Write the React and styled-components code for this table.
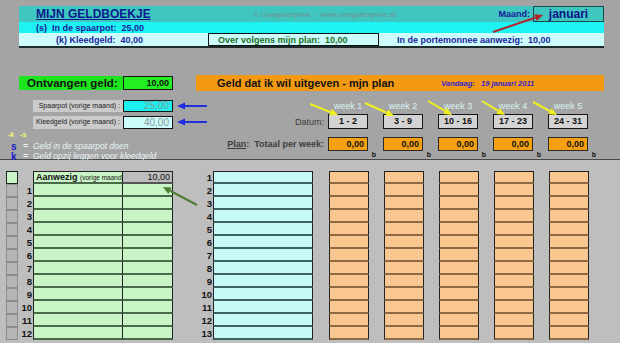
import React from "react";
import styled, { createGlobalStyle } from "styled-components";

const GlobalStyle = createGlobalStyle`
  body {
    margin: 0;
    background: #a4a4a4;
  }
`;

const Root = styled.div`
  position: relative;
  width: 620px;
  height: 343px;
  overflow: hidden;
  display: flex;
  flex-direction: column;
  font-family: "Liberation Sans", Arial, sans-serif;
  color: #111;
`;

const TopSection = styled.div`
  height: 160px;
  flex-shrink: 0;
  box-sizing: border-box;
  padding-top: 6px;
  background: #a4a4a4;
  border-bottom: 1px solid #4a4a4a;
`;

// header band ---------------------------------------------------------
const Header = styled.div`
  margin-left: 19px;
  width: 585px;
  border-bottom: 2px solid #1e2a2a;
`;

const HeaderRow = styled.div`
  display: flex;
  align-items: center;
  height: ${(p) => p.h}px;
  background: ${(p) => p.bg};
  padding-left: ${(p) => p.pad || 0}px;
  box-sizing: border-box;
`;

const Title = styled.span`
  font-size: 12px;
  font-weight: bold;
  color: #0c1a8c;
  text-decoration: underline;
`;

const Copyright = styled.span`
  margin-left: 103px;
  font-size: 7px;
  font-weight: bold;
  color: #6a9c98;
  white-space: pre;
`;

const MonthLabel = styled.span`
  margin-left: auto;
  margin-right: 3px;
  font-size: 9px;
  font-weight: bold;
  color: #1a1a9a;
`;

const MonthBox = styled.div`
  width: 71px;
  height: 16px;
  box-sizing: border-box;
  border: 1px solid #1d4848;
  display: flex;
  align-items: center;
  justify-content: center;
  font-size: 12px;
  font-weight: bold;
  color: #10108a;
`;

const HeadText = styled.span`
  font-size: 9px;
  font-weight: bold;
  color: ${(p) => p.color || "#1c1c9c"};
  white-space: pre;
  margin-left: ${(p) => p.ml || 0}px;
`;

const PlanBox = styled.div`
  margin-left: 65px;
  width: 171px;
  height: 13px;
  box-sizing: border-box;
  border: 1px solid #111;
  display: flex;
  align-items: center;
  padding-left: 9px;
`;

// middle part -------------------------------------------------------------
const Middle = styled.div`
  display: flex;
  align-items: flex-start;
`;

const LeftCol = styled.div`
  margin-left: 8px;
  margin-top: 28px;
  width: 165px;
`;

const BoxRow = styled.div`
  display: flex;
  height: ${(p) => p.h}px;
  margin-left: ${(p) => p.ml}px;
  margin-top: ${(p) => p.mt || 0}px;
`;

const ReceivedLabel = styled.div`
  width: 104px;
  background: #1ee41e;
  display: flex;
  align-items: center;
  padding-left: 8px;
  box-sizing: border-box;
  font-size: 11.5px;
  font-weight: bold;
`;

const ValueBox = styled.div`
  width: 50px;
  box-sizing: border-box;
  border: 1px solid #151515;
  background: ${(p) => p.bg};
  color: ${(p) => p.color || "#111"};
  font-size: ${(p) => p.fs || 9}px;
  font-weight: ${(p) => (p.bold ? "bold" : "normal")};
  text-align: right;
  padding-right: 3px;
  line-height: ${(p) => p.lh || 11}px;
`;

const SmallLabel = styled.div`
  width: 90px;
  background: #cbcbcb;
  font-size: 7px;
  color: #222;
  text-align: right;
  padding-right: 3px;
  box-sizing: border-box;
  line-height: 12px;
  white-space: nowrap;
  overflow: hidden;
`;

const KeyHint = styled.div`
  margin-top: 2px;
  height: 8px;
  font-size: 7px;
  font-weight: bold;
  color: #f7f76a;
  white-space: pre;
  line-height: 8px;
`;

const LegendList = styled.div`
  margin-top: 2px;
`;

const LegendRow = styled.div`
  display: flex;
  align-items: center;
  height: 10px;
`;

const LegendKey = styled.span`
  width: 15px;
  padding-left: 3px;
  box-sizing: border-box;
  font-size: 10px;
  font-weight: bold;
  color: #1a1acc;
`;

const LegendEq = styled.span`
  width: 10px;
  font-size: 9px;
  font-weight: bold;
  color: #e8f4f4;
`;

const LegendText = styled.span`
  font-size: 8.5px;
  font-style: italic;
  color: #e8f6f6;
  white-space: nowrap;
`;

const RightCol = styled.div`
  margin-left: 23px;
  margin-top: 27px;
  width: 408px;
`;

const Banner = styled.div`
  height: 16px;
  background: #f49a12;
  display: flex;
  align-items: center;
  padding-left: 21px;
`;

const BannerTitle = styled.span`
  font-size: 11px;
  font-weight: bold;
  color: #111;
`;

const Today = styled.span`
  margin-left: 47px;
  font-size: 7.5px;
  font-weight: bold;
  font-style: italic;
  color: #3424cc;
  white-space: pre;
`;

const WeekRow = styled.div`
  display: flex;
  align-items: center;
  height: ${(p) => p.h}px;
  margin-top: ${(p) => p.mt || 0}px;
`;

const RowLabel = styled.div`
  width: 130px;
  margin-right: 2px;
  text-align: right;
  padding-right: 2px;
  box-sizing: border-box;
  font-size: 9px;
  font-weight: ${(p) => (p.bold ? "bold" : "normal")};
  color: #3e3e3e;
  white-space: pre;
`;

const Underlined = styled.span`
  text-decoration: underline;
`;

const Cells = styled.div`
  display: flex;
  gap: 15px;
  height: 100%;
`;

const WeekName = styled.div`
  width: 40px;
  text-align: center;
  font-size: 9px;
  color: #d6f2f2;
  line-height: 11px;
`;

const DateBox = styled.div`
  width: 40px;
  box-sizing: border-box;
  border: 1px solid #151515;
  background: #d3d3d3;
  text-align: center;
  font-size: 9px;
  font-weight: bold;
  line-height: 13px;
`;

const TotalBox = styled.div`
  width: 40px;
  box-sizing: border-box;
  border: 1px solid #2a2a2a;
  background: #f5a012;
  text-align: right;
  padding-right: 3px;
  font-size: 9px;
  font-weight: bold;
  line-height: 12px;
`;

const BMark = styled.div`
  width: 48px;
  text-align: right;
  margin-right: -8px;
  font-size: 7px;
  font-weight: bold;
  line-height: 8px;
`;

// grid part -----------------------------------------------------------------
const BottomSection = styled.div`
  flex: 1;
  background: #bebebe;
  padding-top: 11px;
  display: flex;
  align-items: flex-start;
`;

const Block = styled.div`
  margin-left: ${(p) => p.ml}px;
  display: flex;
  flex-direction: column;
`;

const GridRow = styled.div`
  display: flex;
  height: 13px;
`;

const SideSquare = styled.div`
  width: 12px;
  height: 13px;
  box-sizing: border-box;
  border: 1px solid ${(p) => (p.first ? "#222" : "#8c8c8c")};
  background: ${(p) => (p.first ? "#c8f6c6" : "#b6b6b6")};
  margin-right: 1px;
`;

const RowNum = styled.div`
  width: ${(p) => p.w}px;
  text-align: right;
  padding-right: 1px;
  box-sizing: border-box;
  font-size: 9.5px;
  font-weight: bold;
  line-height: 13px;
`;

const Cell = styled.div`
  width: ${(p) => p.w}px;
  height: 13px;
  box-sizing: border-box;
  background: ${(p) => p.bg};
  border-right: 1px solid #222;
  border-left: ${(p) => (p.left ? "1px solid #222" : "none")};
  border-bottom: 2px solid ${(p) => p.line};
  border-top: ${(p) => (p.top ? "1px solid #222" : "none")};
  font-size: 9px;
  line-height: 10px;
  padding: 0 2px;
  white-space: nowrap;
  text-align: ${(p) => p.align || "left"};
`;

const Small = styled.span`
  font-size: 6.5px;
  font-weight: normal;
`;

const Overlay = styled.svg`
  position: absolute;
  top: 0;
  left: 0;
  pointer-events: none;
`;

const weeks = ["1 - 2", "3 - 9", "10 - 16", "17 - 23", "24 - 31"];
const GREEN = "#c9f5c6";
const GREEN_LINE = "#4a684a";
const CYAN = "#c6f8f8";
const CYAN_LINE = "#3e6262";
const PEACH = "#f9c78f";
const PEACH_LINE = "#8d6a44";

function Arrow({ x1, y1, x2, y2, color, w = 2, head = 8 }) {
  const a = Math.atan2(y2 - y1, x2 - x1);
  const bx = x2 - head * Math.cos(a);
  const by = y2 - head * Math.sin(a);
  const px = Math.sin(a) * head * 0.45;
  const py = -Math.cos(a) * head * 0.45;
  return (
    <g>
      <line x1={x1} y1={y1} x2={bx} y2={by} stroke={color} strokeWidth={w} />
      <polygon
        points={`${x2},${y2} ${bx + px},${by + py} ${bx - px},${by - py}`}
        fill={color}
      />
    </g>
  );
}

export default function App() {
  const greenRows = Array.from({ length: 13 }, (_, i) => i);
  const cyanRows = Array.from({ length: 13 }, (_, i) => i + 1);

  return (
    <Root>
      <GlobalStyle />
      <TopSection>
        <Header>
          <HeaderRow h={16} bg="#3fc6c0" pad={17}>
            <Title>MIJN GELDBOEKJE</Title>
            <Copyright>© Computerprive  -  www.computerprive.nl</Copyright>
            <MonthLabel>Maand:</MonthLabel>
            <MonthBox>januari</MonthBox>
          </HeaderRow>
          <HeaderRow h={11} bg="#1ef2f2" pad={17}>
            <HeadText>{"(s)  In de spaarpot:  25,00"}</HeadText>
          </HeaderRow>
          <HeaderRow h={13} bg="#ccfcfc" pad={37}>
            <HeadText>{"(k) Kleedgeld:  40,00"}</HeadText>
            <PlanBox>
              <HeadText color="#1f6e1f">{"Over volgens mijn plan:  10,00"}</HeadText>
            </PlanBox>
            <HeadText ml={18}>{"In de portemonnee aanwezig:  10,00"}</HeadText>
          </HeaderRow>
        </Header>

        <Middle>
          <LeftCol>
            <BoxRow h={14} ml={11}>
              <ReceivedLabel>Ontvangen geld:</ReceivedLabel>
              <ValueBox bg="#22ee22" bold lh={12}>
                10,00
              </ValueBox>
            </BoxRow>
            <BoxRow h={12} ml={25} mt={10}>
              <SmallLabel>Spaarpot (vorige maand) :</SmallLabel>
              <ValueBox bg="#1ef0f0" color="#7f9c9c" fs={10} lh={10}>
                25,00
              </ValueBox>
            </BoxRow>
            <BoxRow h={13} ml={25} mt={4}>
              <SmallLabel>Kleedgeld (vorige maand) :</SmallLabel>
              <ValueBox bg="#ccfcfc" color="#8a9a9a" fs={10} lh={11}>
                40,00
              </ValueBox>
            </BoxRow>
            <KeyHint>{"-k   -s"}</KeyHint>
            <LegendList>
              <LegendRow>
                <LegendKey>s</LegendKey>
                <LegendEq>=</LegendEq>
                <LegendText>Geld in de spaarpot doen</LegendText>
              </LegendRow>
              <LegendRow>
                <LegendKey>k</LegendKey>
                <LegendEq>=</LegendEq>
                <LegendText>Geld opzij leggen voor kleedgeld</LegendText>
              </LegendRow>
            </LegendList>
          </LeftCol>

          <RightCol>
            <Banner>
              <BannerTitle>Geld dat ik wil uitgeven - mjn plan</BannerTitle>
              <Today>{"Vandaag:   19 januari 2011"}</Today>
            </Banner>
            <WeekRow h={11} mt={10}>
              <RowLabel />
              <Cells>
                {weeks.map((_, i) => (
                  <WeekName key={i}>week {i + 1}</WeekName>
                ))}
              </Cells>
            </WeekRow>
            <WeekRow h={15} mt={2}>
              <RowLabel>Datum:</RowLabel>
              <Cells>
                {weeks.map((w) => (
                  <DateBox key={w}>{w}</DateBox>
                ))}
              </Cells>
            </WeekRow>
            <WeekRow h={14} mt={8}>
              <RowLabel bold>
                <Underlined>Plan</Underlined>
                {":  Totaal per week:"}
              </RowLabel>
              <Cells>
                {weeks.map((w) => (
                  <TotalBox key={w}>0,00</TotalBox>
                ))}
              </Cells>
            </WeekRow>
            <WeekRow h={8}>
              <RowLabel />
              <Cells>
                {weeks.map((w) => (
                  <BMark key={w}>b</BMark>
                ))}
              </Cells>
            </WeekRow>
          </RightCol>
        </Middle>
      </TopSection>

      <BottomSection>
        <Block ml={6}>
          {greenRows.map((i) => (
            <GridRow key={i}>
              <SideSquare first={i === 0} />
              <RowNum w={14}>{i === 0 ? "" : i}</RowNum>
              <Cell w={90} bg={GREEN} line={GREEN_LINE} left top={i === 0}>
                {i === 0 && (
                  <b>
                    Aanwezig <Small>(vorige maand)</Small>
                  </b>
                )}
              </Cell>
              <Cell
                w={50}
                bg={i === 0 ? "#bdbdbd" : GREEN}
                line={i === 0 ? "#555" : GREEN_LINE}
                top={i === 0}
                align="right"
              >
                {i === 0 ? "10,00" : ""}
              </Cell>
            </GridRow>
          ))}
        </Block>

        <Block ml={26}>
          {cyanRows.map((n) => (
            <GridRow key={n}>
              <RowNum w={14}>{n}</RowNum>
              <Cell w={100} bg={CYAN} line={CYAN_LINE} left top={n === 1} />
            </GridRow>
          ))}
        </Block>

        {weeks.map((w, k) => (
          <Block key={w} ml={k === 0 ? 16 : 15}>
            {cyanRows.map((n) => (
              <Cell key={n} w={40} bg={PEACH} line={PEACH_LINE} left top={n === 1} />
            ))}
          </Block>
        ))}
      </BottomSection>

      <Overlay width="620" height="343" viewBox="0 0 620 343">
        <Arrow x1={493} y1={32} x2={543} y2={15} color="#b0242a" />
        <Arrow x1={207} y1={106} x2={177} y2={106} color="#1f2fdc" />
        <Arrow x1={207} y1={122} x2={177} y2={122} color="#1f2fdc" />
        <Arrow x1={197} y1={205} x2={163} y2={187} color="#4e7d34" />
        <Arrow x1={310} y1={104} x2={338} y2={115} color="#f0f020" />
        <Arrow x1={365} y1={103} x2={394} y2={116} color="#f0f020" />
        <Arrow x1={428} y1={101} x2={452} y2={115} color="#f0f020" />
        <Arrow x1={482} y1={101} x2={505} y2={115} color="#f0f020" />
        <Arrow x1={533} y1={102} x2={557} y2={115} color="#f0f020" />
      </Overlay>
    </Root>
  );
}
